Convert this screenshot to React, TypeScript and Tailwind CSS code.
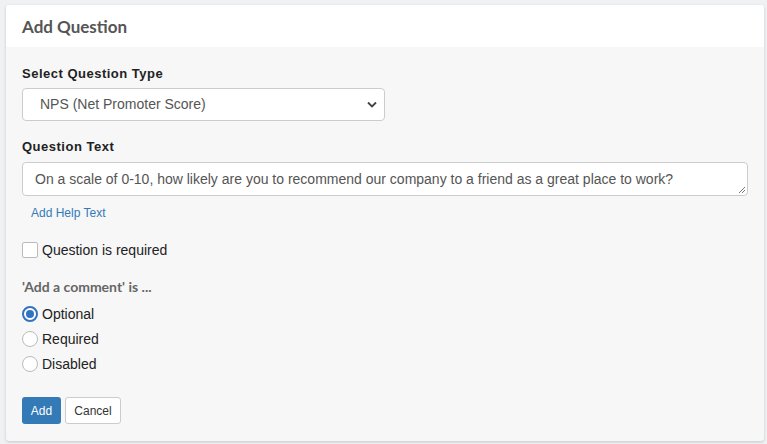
import React from "react";

export default function App() {
  return (
    <div className="w-[767px] h-[444px] bg-[#f0f1f3] pt-[5px] pl-[6px] pr-[3px] font-['Liberation_Sans',Arial,sans-serif]">
      <div className="w-[758px] h-[436px] rounded-[3px] bg-[#f7f7f7] shadow-[0_1px_3px_rgba(0,0,0,0.18)] overflow-hidden">
        <div className="h-[42px] bg-white flex items-center pl-[16px]">
          <span className="font-['Lato',sans-serif] font-bold text-[17px] text-[#555] leading-none">Add Question</span>
        </div>
        <div className="pl-[16px] pt-[19px]">
          <div className="text-[13px] font-bold text-[#222] leading-[15px] tracking-[0.5px]">Select Question Type</div>
          <div className="mt-[7px] w-[363px] h-[33px] bg-white border border-[#ccc] rounded-[4px] flex items-center justify-between pl-[17px] pr-[4px]">
            <span className="text-[14px] text-[#555]">NPS (Net Promoter Score)</span>
            <svg width="10" height="7" viewBox="0 0 10 7" className="mr-[3px]">
              <path d="M1 1.5 L5 5.5 L9 1.5" fill="none" stroke="#444" strokeWidth="1.8" />
            </svg>
          </div>
          <div className="mt-[18px] text-[13px] font-bold text-[#222] leading-[15px] tracking-[0.5px]">Question Text</div>
          <div className="relative mt-[8px] w-[726px] h-[34px] bg-white border border-[#ccc] rounded-[4px] flex items-center pl-[12px]">
            <span className="text-[14px] text-[#555]">On a scale of 0-10, how likely are you to recommend our company to a friend as a great place to work?</span>
            <svg width="8" height="8" viewBox="0 0 8 8" className="absolute right-[1px] bottom-[1px]">
              <path d="M7 1 L1 7 M7 4 L4 7" stroke="#777" strokeWidth="1" />
            </svg>
          </div>
          <div className="mt-[10px] pl-[9px] text-[12px] text-[#337ab7] leading-[14px]">Add Help Text</div>
          <div className="mt-[21px] flex items-center h-[18px]">
            <span className="w-[16px] h-[16px] bg-white border border-[#bbb] rounded-[2px]"></span>
            <span className="ml-[4px] text-[14px] text-[#222]">Question is required</span>
          </div>
          <div className="mt-[19px] font-['Lato',sans-serif] font-bold text-[14px] text-[#666] leading-[17px]">'Add a comment' is ...</div>
          <div className="mt-[10px] flex flex-col gap-[7px]">
            <div className="flex items-center h-[18px]">
              <span className="w-[16px] h-[16px] rounded-full border-2 border-[#3273c0] bg-white flex items-center justify-center">
                <span className="w-[8px] h-[8px] rounded-full bg-[#3273c0]"></span>
              </span>
              <span className="ml-[4px] text-[14px] text-[#222]">Optional</span>
            </div>
            <div className="flex items-center h-[18px]">
              <span className="w-[16px] h-[16px] rounded-full border border-[#bbb] bg-white"></span>
              <span className="ml-[4px] text-[14px] text-[#222]">Required</span>
            </div>
            <div className="flex items-center h-[18px]">
              <span className="w-[16px] h-[16px] rounded-full border border-[#bbb] bg-white"></span>
              <span className="ml-[4px] text-[14px] text-[#222]">Disabled</span>
            </div>
          </div>
          <div className="mt-[24px] flex gap-[4px]">
            <button className="h-[27px] w-[39px] rounded-[3px] bg-[#337ab7] text-white text-[12px] flex items-center justify-center">Add</button>
            <button className="h-[27px] w-[56px] rounded-[3px] bg-white border border-[#ccc] text-[#333] text-[12px] flex items-center justify-center">Cancel</button>
          </div>
        </div>
      </div>
    </div>
  );
}
